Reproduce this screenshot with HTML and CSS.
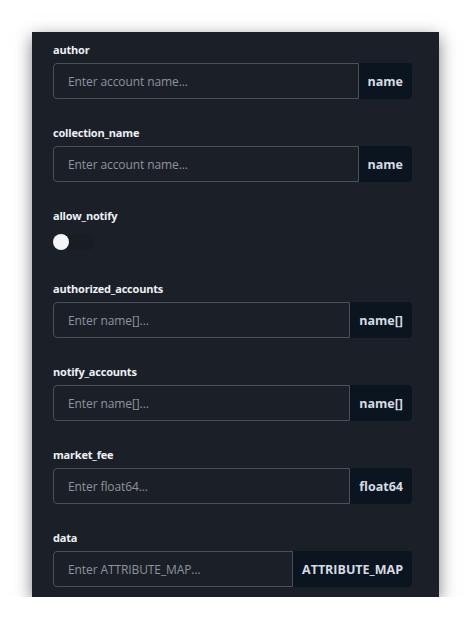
FILE: index.html
```html
<!DOCTYPE html>
<html>
<head>
<meta charset="utf-8">
<link rel="stylesheet" href="styles.css">
</head>
<body>
<div class="panel">
  <div class="field">
    <div class="label">author</div>
    <div class="group"><div class="input">Enter account name...</div><div class="addon">name</div></div>
  </div>
  <div class="field">
    <div class="label">collection_name</div>
    <div class="group"><div class="input">Enter account name...</div><div class="addon">name</div></div>
  </div>
  <div class="field">
    <div class="label">allow_notify</div>
    <div class="toggle-wrap"><div class="toggle"><div class="knob"></div></div></div>
  </div>
  <div class="field">
    <div class="label">authorized_accounts</div>
    <div class="group"><div class="input">Enter name[]...</div><div class="addon">name[]</div></div>
  </div>
  <div class="field">
    <div class="label">notify_accounts</div>
    <div class="group"><div class="input">Enter name[]...</div><div class="addon">name[]</div></div>
  </div>
  <div class="field">
    <div class="label">market_fee</div>
    <div class="group"><div class="input">Enter float64...</div><div class="addon">float64</div></div>
  </div>
  <div class="field last">
    <div class="label">data</div>
    <div class="group"><div class="input">Enter ATTRIBUTE_MAP...</div><div class="addon">ATTRIBUTE_MAP</div></div>
  </div>
</div>
</body>
</html>
```
FILE: styles.css
```css
html, body {
  margin: 0;
  padding: 0;
  background: #ffffff;
}
body {
  padding-top: 32px;
  font-family: "Open Sans", "Noto Sans", sans-serif;
}
.panel {
  margin-left: 32px;
  width: 407px;
  box-sizing: border-box;
  padding: 10px 27px 10px 21px;
  background: #1b2028;
  box-shadow: 0 5px 16px rgba(0, 0, 0, 0.5);
}
.field {
  margin-bottom: 26px;
}
.field.last {
  margin-bottom: 0;
}
.label {
  height: 16px;
  line-height: 16px;
  font-size: 11px;
  font-weight: 700;
  color: #eef0f5;
  margin-bottom: 5px;
  letter-spacing: -0.2px;
}
.group {
  display: flex;
  height: 36px;
}
.input {
  flex: 1;
  box-sizing: border-box;
  border: 1px solid #4a4f58;
  border-radius: 4px 0 0 4px;
  padding: 0 14px;
  display: flex;
  align-items: center;
  font-size: 12px;
  color: #8e939b;
  letter-spacing: -0.1px;
}
.addon {
  box-sizing: border-box;
  background: #0b1520;
  border-radius: 0 4px 4px 0;
  padding: 0 9px;
  display: flex;
  align-items: center;
  font-size: 12.5px;
  font-weight: 700;
  color: #d6dbe4;
  letter-spacing: 0;
}
.toggle-wrap {
  height: 26px;
  display: flex;
  align-items: center;
  margin-bottom: 1px;
}
.toggle {
  width: 42px;
  height: 16px;
  border-radius: 8px;
  background: #181d24;
  position: relative;
}
.knob {
  position: absolute;
  left: 0;
  top: 0;
  width: 16px;
  height: 16px;
  border-radius: 50%;
  background: #f4f5f7;
}
```
